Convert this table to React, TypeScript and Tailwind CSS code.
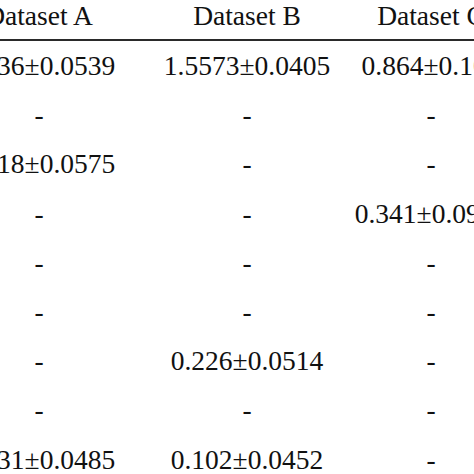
import React from "react";

const rows: [string, string, string][] = [
  ["0.836±0.0539", "1.5573±0.0405", "0.864±0.102"],
  ["-", "-", "-"],
  ["0.718±0.0575", "-", "-"],
  ["-", "-", "0.341±0.0917"],
  ["-", "-", "-"],
  ["-", "-", "-"],
  ["-", "0.226±0.0514", "-"],
  ["-", "-", "-"],
  ["0.431±0.0485", "0.102±0.0452", "-"],
];

export default function App() {
  return (
    <div
      className="w-[474px] h-[474px] overflow-hidden bg-white text-[#111111]"
      style={{ fontFamily: '"Liberation Serif", "Times New Roman", serif' }}
    >
      <div className="ml-[-65px] w-[576px] text-[27.5px]">
        <div className="grid grid-cols-[208px_208px_160px] h-[39px] leading-[32px] border-b-2 border-[#2a2a2a] box-content">
          <div className="text-center whitespace-nowrap">Dataset A</div>
          <div className="text-center whitespace-nowrap">Dataset B</div>
          <div className="text-center whitespace-nowrap">Dataset C</div>
        </div>
        {rows.map((r, i) => (
          <div
            key={i}
            className="grid grid-cols-[208px_208px_160px] h-[49.2px] leading-[49.2px]"
          >
            {r.map((c, j) => (
              <div key={j} className="text-center whitespace-nowrap">
                {c}
              </div>
            ))}
          </div>
        ))}
      </div>
    </div>
  );
}
